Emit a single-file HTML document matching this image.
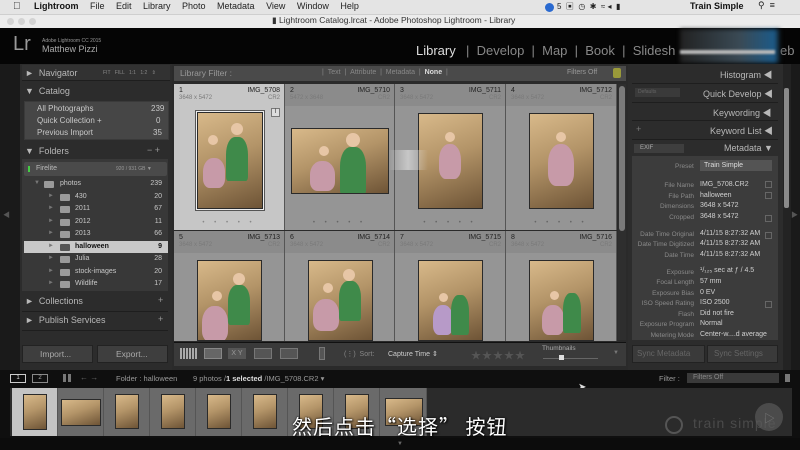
<!DOCTYPE html>
<html><head><meta charset="utf-8"><style>
*{margin:0;padding:0;box-sizing:border-box}
body{width:800px;height:450px;overflow:hidden;background:#0c0c0c;font-family:"Liberation Sans","Noto Sans CJK SC",sans-serif;position:relative;color:#ccc}
.a{position:absolute}
.t{position:absolute;white-space:nowrap}
.ph{position:absolute;border:1px solid #2a2a2a;background:linear-gradient(160deg,#d8b98a 0%,#b39468 45%,#6e5436 100%);overflow:hidden}
.ph .g{position:absolute;background:#3f8a4a;border-radius:40% 40% 10% 10%}
.ph .p{position:absolute;background:#c79aa8;border-radius:45% 45% 30% 30%}
.ph .h{position:absolute;background:#e7c6a6;border-radius:50%}
.cell{position:absolute;background:#959595;border-right:1px solid #555}
.cell .hd{position:absolute;left:0;top:0;right:0;height:22px;background:#8b8b8b}
.cell .n{position:absolute;left:5px;top:3px;font-size:7px;color:#222}
.cell .nm{position:absolute;right:4px;top:3px;font-size:7px;color:#222}
.cell .dm{position:absolute;left:5px;top:11px;font-size:6px;color:#7a7a7a}
.cell .cr{position:absolute;right:4px;top:11px;font-size:6px;color:#7a7a7a}
.cell .dots{position:absolute;left:0;right:0;top:136px;text-align:center;font-size:6px;color:#666;letter-spacing:4px}
.lp{font-size:8px;color:#c8c8c8}
.hdr{position:absolute;font-size:9px;color:#b8b8b8}
.fr{position:absolute;left:24px;width:144px;height:12px;font-size:7px;color:#c8c8c8}
.fr .fi{position:absolute;left:36px;top:3px;width:10px;height:7px;background:#9a9a9a;border-radius:1px}
.fr .fl{position:absolute;left:51px;top:2px}
.fr .fc{position:absolute;right:6px;top:2px}
.fr .ar{position:absolute;left:24px;top:2px;font-size:6px;color:#777}
.ml{position:absolute;right:106px;font-size:6.5px;color:#8a8a8a;text-align:right}
.mv{position:absolute;left:700px;font-size:7px;color:#d0d0d0;white-space:nowrap}
.fs{position:absolute;top:388px;width:46px;height:48px;background:#6a6a6a;border-right:1px solid #555}
</style></head><body>
<div class="a" style="left:0;top:0;width:800px;height:14px;background:#e4e4e4"></div>
<div class="t" style="left:13px;top:1px;font-size:10px;color:#222">&#63743;</div>
<div class="t" style="left:34px;top:1px;font-size:9px;color:#111;font-weight:bold">Lightroom</div>
<div class="t" style="left:90px;top:1px;font-size:9px;color:#222;word-spacing:9px">File Edit Library Photo Metadata View Window Help</div>
<div class="a" style="left:545px;top:3px;width:9px;height:9px;border-radius:50%;background:#2a6ad0"></div>
<div class="t" style="left:557px;top:1px;font-size:8px;color:#222">5 &nbsp;&#9635; &nbsp;&#9719; &nbsp;&#10033; &nbsp;&#8776; &#9666;&nbsp; &#9646;</div>
<div class="t" style="left:690px;top:1px;font-size:9px;color:#111;font-weight:bold">Train Simple</div>
<div class="t" style="left:758px;top:0px;font-size:9px;color:#222">&#9906; &nbsp;&#8801;</div>
<div class="a" style="left:0;top:14px;width:800px;height:14px;background:#ececec;border-top:1px solid #cfcfcf"></div>
<div class="a" style="left:7px;top:18px;width:7px;height:7px;border-radius:50%;background:#d3d3d3"></div>
<div class="a" style="left:18px;top:18px;width:7px;height:7px;border-radius:50%;background:#d3d3d3"></div>
<div class="a" style="left:29px;top:18px;width:7px;height:7px;border-radius:50%;background:#d3d3d3"></div>
<div class="t" style="left:272px;top:15px;font-size:8.5px;color:#333">&#9646; Lightroom Catalog.lrcat - Adobe Photoshop Lightroom - Library</div>
<div class="a" style="left:0;top:28px;width:800px;height:36px;background:#050505"></div>
<div class="t" style="left:13px;top:33px;font-size:20px;color:#9a9a9a">Lr</div>
<div class="t" style="left:42px;top:38px;font-size:5px;color:#999">Adobe Lightroom CC 2015</div>
<div class="t" style="left:42px;top:44px;font-size:9px;color:#aaa">Matthew Pizzi</div>
<div class="t" style="left:416px;top:43px;font-size:13px;color:#ddd">Library</div>
<div class="t" style="left:466px;top:43px;font-size:13px;color:#888">| &nbsp;Develop &nbsp;| &nbsp;Map &nbsp;| &nbsp;Book &nbsp;| &nbsp;Slidesh</div>
<div class="t" style="left:780px;top:43px;font-size:13px;color:#888">eb</div>
<div class="a" style="left:680px;top:29px;width:100px;height:34px;background:linear-gradient(90deg,#222 0%,#3a4a55 60%,#1c5a88 95%,#111 100%);filter:blur(2px)"></div>
<div class="a" style="left:680px;top:50px;width:95px;height:4px;background:#bbb;filter:blur(1px)"></div>
<div class="a" style="left:0;top:64px;width:800px;height:306px;background:#1a1a1a"></div>
<div class="t" style="left:3px;top:210px;font-size:7px;color:#555">&#9664;</div>
<div class="t" style="left:791px;top:210px;font-size:7px;color:#555">&#9654;</div>
<div class="a" style="left:20px;top:64px;width:152px;height:306px;background:#2c2c2c"></div>
<div class="a" style="left:22px;top:65px;width:148px;height:16px;background:#323232;border-bottom:1px solid #1e1e1e"></div>
<div class="hdr" style="left:25px;top:68px">&#9658;&nbsp; Navigator</div>
<div class="t" style="left:103px;top:70px;font-size:5px;color:#888;word-spacing:3px">FIT FILL 1:1 1:2 &#8661;</div>
<div class="hdr" style="left:25px;top:86px">&#9660;&nbsp; Catalog</div>
<div class="a" style="left:24px;top:101px;width:145px;height:39px;background:#464646;border:1px solid #3a3a3a"></div>
<div class="t lp" style="left:37px;top:104px">All Photographs</div><div class="t lp" style="left:151px;top:104px">239</div>
<div class="t lp" style="left:37px;top:116px">Quick Collection +</div><div class="t lp" style="left:156px;top:116px">0</div>
<div class="t lp" style="left:37px;top:128px">Previous Import</div><div class="t lp" style="left:153px;top:128px">35</div>
<div class="hdr" style="left:25px;top:146px">&#9660;&nbsp; Folders</div>
<div class="t" style="left:147px;top:145px;font-size:9px;color:#999">&#8722; +</div>
<div class="a" style="left:22px;top:159px;width:146px;height:132px;background:#383838"></div>
<div class="a" style="left:24px;top:162px;width:143px;height:14px;background:#4a4a4a;border-radius:2px"></div>
<div class="a" style="left:28px;top:166px;width:2px;height:6px;background:#4c4"></div>
<div class="t" style="left:36px;top:165px;font-size:7px;color:#bbb">Firelite</div>
<div class="t" style="left:116px;top:166px;font-size:5px;color:#999">920 / 931 GB &#9660;</div>
<div class="fr" style="top:178px"><span class="ar" style="left:10px">&#9660;</span><span class="fi" style="left:20px"></span><span class="fl" style="left:36px">photos</span><span class="fc">239</span></div>
<div class="fr" style="top:190.5px"><span class="ar">&#9658;</span><span class="fi"></span><span class="fl">430</span><span class="fc">20</span></div>
<div class="fr" style="top:203px"><span class="ar">&#9658;</span><span class="fi"></span><span class="fl">2011</span><span class="fc">67</span></div>
<div class="fr" style="top:215.5px"><span class="ar">&#9658;</span><span class="fi"></span><span class="fl">2012</span><span class="fc">11</span></div>
<div class="fr" style="top:228px"><span class="ar">&#9658;</span><span class="fi"></span><span class="fl">2013</span><span class="fc">66</span></div>
<div class="fr" style="top:240.5px;background:#c9c9c9;color:#111;font-weight:bold"><span class="ar">&#9658;</span><span class="fi" style="background:#555"></span><span class="fl">halloween</span><span class="fc">9</span></div>
<div class="fr" style="top:253px"><span class="ar">&#9658;</span><span class="fi"></span><span class="fl">Julia</span><span class="fc">28</span></div>
<div class="fr" style="top:265.5px"><span class="ar">&#9658;</span><span class="fi"></span><span class="fl">stock-images</span><span class="fc">20</span></div>
<div class="fr" style="top:278px"><span class="ar">&#9658;</span><span class="fi"></span><span class="fl">Wildlife</span><span class="fc">17</span></div>
<div class="hdr" style="left:25px;top:296px">&#9658;&nbsp; Collections</div><div class="t" style="left:158px;top:295px;font-size:9px;color:#999">+</div>
<div class="a" style="left:22px;top:311px;width:146px;height:1px;background:#1e1e1e"></div>
<div class="hdr" style="left:25px;top:315px">&#9658;&nbsp; Publish Services</div><div class="t" style="left:158px;top:314px;font-size:9px;color:#999">+</div>
<div class="a" style="left:22px;top:330px;width:146px;height:1px;background:#1e1e1e"></div>
<div class="a" style="left:22px;top:345px;width:71px;height:18px;background:#3e3e3e;border:1px solid #222"></div>
<div class="t" style="left:40px;top:349px;font-size:8.5px;color:#aaa">Import...</div>
<div class="a" style="left:97px;top:345px;width:71px;height:18px;background:#3e3e3e;border:1px solid #222"></div>
<div class="t" style="left:116px;top:349px;font-size:8.5px;color:#aaa">Export...</div>
<div class="a" style="left:172px;top:64px;width:456px;height:306px;background:#2a2a2a"></div>
<div class="a" style="left:174px;top:66px;width:452px;height:15px;background:#4a4a4a"></div>
<div class="t" style="left:180px;top:68px;font-size:8.5px;color:#999">Library Filter :</div>
<div class="t" style="left:322px;top:69px;font-size:7px;color:#888">| &nbsp;Text &nbsp;| &nbsp;Attribute &nbsp;| &nbsp;Metadata &nbsp;| &nbsp;<b style="color:#ddd">None</b> &nbsp;|</div>
<div class="t" style="left:567px;top:69px;font-size:7px;color:#999">Filters Off</div>
<div class="a" style="left:613px;top:68px;width:8px;height:10px;background:#9a9a3a;border-radius:2px"></div>
<div class="a" style="left:174px;top:83px;width:443px;height:258px;background:#2a2a2a"></div>
<div class="cell" style="left:174px;top:84px;width:111px;height:146px;background:#c6c6c6"><div class="hd" style="background:#c6c6c6"></div><span class="n">1</span><span class="nm">IMG_5708</span><span class="dm">3648 x 5472</span><span class="cr">CR2</span><span class="dots" style="color:#888">• • • • •</span></div>
<div class="a" style="left:271px;top:108px;width:9px;height:9px;border:1px solid #777;background:#ddd;font-size:6px;color:#333;text-align:center">I</div>
<div class="a" style="left:195px;top:110px;width:70px;height:101px;border:1px solid #555;background:#eee"></div>
<div class="ph" style="left:197px;top:112px;width:66px;height:97px"><div class="h" style="left:10px;top:22px;width:10px;height:10px"></div><div class="p" style="left:5px;top:45px;width:22px;height:30px"></div><div class="h" style="left:33px;top:10px;width:12px;height:12px"></div><div class="g" style="left:28px;top:24px;width:22px;height:44px"></div></div>
<div class="cell" style="left:285px;top:84px;width:110px;height:146px"><div class="hd"></div><span class="n">2</span><span class="nm">IMG_5710</span><span class="dm">5472 x 3648</span><span class="cr">CR2</span><span class="dots">• • • • •</span></div>
<div class="ph" style="left:291px;top:128px;width:98px;height:66px"><div class="h" style="left:27px;top:17px;width:10px;height:10px"></div><div class="p" style="left:18px;top:32px;width:25px;height:30px"></div><div class="h" style="left:54px;top:4px;width:14px;height:14px"></div><div class="g" style="left:48px;top:18px;width:26px;height:48px"></div></div>
<div class="cell" style="left:395px;top:84px;width:111px;height:146px"><div class="hd"></div><span class="n">3</span><span class="nm">IMG_5711</span><span class="dm">3648 x 5472</span><span class="cr">CR2</span><span class="dots">• • • • •</span></div>
<div class="ph" style="left:418px;top:113px;width:65px;height:96px"><div class="h" style="left:26px;top:18px;width:10px;height:10px"></div><div class="p" style="left:20px;top:30px;width:22px;height:35px"></div></div>
<div class="a" style="left:388px;top:150px;width:40px;height:20px;background:linear-gradient(90deg,rgba(200,200,200,0),rgba(220,220,220,.7),rgba(200,200,200,0))"></div>
<div class="cell" style="left:506px;top:84px;width:111px;height:146px"><div class="hd"></div><span class="n">4</span><span class="nm">IMG_5712</span><span class="dm">3648 x 5472</span><span class="cr">CR2</span><span class="dots">• • • • •</span></div>
<div class="ph" style="left:529px;top:113px;width:65px;height:96px"><div class="h" style="left:26px;top:18px;width:10px;height:10px"></div><div class="p" style="left:18px;top:30px;width:26px;height:42px"></div></div>
<div class="cell" style="left:174px;top:231px;width:111px;height:110px"><div class="hd"></div><span class="n">5</span><span class="nm">IMG_5713</span><span class="dm">3648 x 5472</span><span class="cr">CR2</span></div>
<div class="ph" style="left:197px;top:260px;width:65px;height:81px"><div class="h" style="left:14px;top:30px;width:10px;height:10px"></div><div class="p" style="left:4px;top:45px;width:26px;height:36px"></div><div class="h" style="left:35px;top:12px;width:12px;height:12px"></div><div class="g" style="left:30px;top:24px;width:22px;height:40px"></div></div>
<div class="cell" style="left:285px;top:231px;width:110px;height:110px"><div class="hd"></div><span class="n">6</span><span class="nm">IMG_5714</span><span class="dm">3648 x 5472</span><span class="cr">CR2</span></div>
<div class="ph" style="left:308px;top:260px;width:65px;height:81px"><div class="h" style="left:14px;top:22px;width:10px;height:10px"></div><div class="p" style="left:4px;top:38px;width:26px;height:32px"></div><div class="h" style="left:34px;top:8px;width:12px;height:12px"></div><div class="g" style="left:30px;top:20px;width:22px;height:40px"></div></div>
<div class="cell" style="left:395px;top:231px;width:111px;height:110px"><div class="hd"></div><span class="n">7</span><span class="nm">IMG_5715</span><span class="dm">3648 x 5472</span><span class="cr">CR2</span></div>
<div class="ph" style="left:418px;top:260px;width:65px;height:81px"><div class="h" style="left:20px;top:32px;width:9px;height:9px"></div><div class="p" style="left:14px;top:44px;width:20px;height:30px;background:#b79ac8"></div><div class="g" style="left:32px;top:34px;width:18px;height:40px"></div></div>
<div class="cell" style="left:506px;top:231px;width:111px;height:110px"><div class="hd"></div><span class="n">8</span><span class="nm">IMG_5716</span><span class="dm">3648 x 5472</span><span class="cr">CR2</span></div>
<div class="ph" style="left:529px;top:260px;width:65px;height:81px"><div class="h" style="left:20px;top:30px;width:9px;height:9px"></div><div class="p" style="left:12px;top:44px;width:22px;height:30px"></div><div class="g" style="left:33px;top:32px;width:18px;height:40px"></div></div>
<div class="a" style="left:618px;top:84px;width:8px;height:256px;background:#2e2e2e"></div>
<div class="a" style="left:619px;top:86px;width:6px;height:145px;background:#7a7a7a;border-radius:3px"></div>
<div class="a" style="left:174px;top:342px;width:452px;height:24px;background:#3a3a3a;border-top:1px solid #111"></div>
<div class="a" style="left:180px;top:348px;width:18px;height:11px;background:repeating-linear-gradient(90deg,#aaa 0 2px,#3a3a3a 2px 3px),#aaa"></div>
<div class="a" style="left:204px;top:348px;width:18px;height:11px;background:#666;border:1px solid #888"></div>
<div class="a" style="left:228px;top:348px;width:18px;height:11px;background:#555;font-size:7px;color:#999;text-align:center;line-height:11px">X Y</div>
<div class="a" style="left:254px;top:348px;width:18px;height:11px;background:#555;border:1px solid #777"></div>
<div class="a" style="left:280px;top:348px;width:18px;height:11px;background:#555;border:1px solid #777"></div>
<div class="a" style="left:319px;top:347px;width:6px;height:13px;background:#555;border:1px solid #777"></div>
<div class="t" style="left:344px;top:350px;font-size:7px;color:#888">(&#8942;)&nbsp; Sort:</div>
<div class="t" style="left:388px;top:350px;font-size:7px;color:#ccc">Capture Time &#8661;</div>
<div class="t" style="left:471px;top:347px;font-size:10px;color:#555;letter-spacing:1px">&#9733;&#9733;&#9733;&#9733;&#9733;</div>
<div class="t" style="left:542px;top:345px;font-size:6.5px;color:#aaa">Thumbnails</div>
<div class="a" style="left:543px;top:358px;width:55px;height:1px;background:#666"></div>
<div class="a" style="left:559px;top:355px;width:5px;height:5px;background:#ddd"></div>
<div class="t" style="left:613px;top:350px;font-size:6px;color:#777">&#9660;</div>
<div class="a" style="left:628px;top:64px;width:155px;height:306px;background:#2c2c2c"></div>
<div class="a" style="left:783px;top:64px;width:8px;height:306px;background:#232323"></div>
<div class="a" style="left:784px;top:88px;width:5px;height:120px;background:#8a8a8a;border-radius:2px"></div>
<div class="hdr" style="left:720px;top:68px">Histogram &#9664;</div>
<div class="a" style="left:632px;top:83px;width:146px;height:1px;background:#1e1e1e"></div>
<div class="a" style="left:635px;top:88px;width:45px;height:9px;background:#3a3a3a"></div>
<div class="t" style="left:638px;top:89px;font-size:5px;color:#666">Defaults</div>
<div class="hdr" style="left:703px;top:87px">Quick Develop &#9664;</div>
<div class="a" style="left:632px;top:102px;width:146px;height:1px;background:#1e1e1e"></div>
<div class="hdr" style="left:713px;top:106px">Keywording &#9664;</div>
<div class="a" style="left:632px;top:120px;width:146px;height:1px;background:#1e1e1e"></div>
<div class="t" style="left:636px;top:124px;font-size:9px;color:#777">+</div>
<div class="hdr" style="left:710px;top:124px">Keyword List &#9664;</div>
<div class="a" style="left:632px;top:139px;width:146px;height:1px;background:#1e1e1e"></div>
<div class="a" style="left:634px;top:144px;width:50px;height:9px;background:#3e3e3e"></div>
<div class="t" style="left:640px;top:145px;font-size:6px;color:#aaa">EXIF</div>
<div class="hdr" style="left:724px;top:143px">Metadata &#9660;</div>
<div class="a" style="left:632px;top:156px;width:146px;height:184px;background:#3c3c3c"></div>
<div class="t" style="left:675px;top:163px;font-size:6.5px;color:#888">Preset</div>
<div class="a" style="left:700px;top:160px;width:72px;height:11px;background:#545454"></div>
<div class="t" style="left:704px;top:162px;font-size:7px;color:#ddd">Train Simple</div>
<div class="ml" style="top:182px">File Name</div><div class="mv" style="top:181px">IMG_5708.CR2</div>
<div class="ml" style="top:193px">File Path</div><div class="mv" style="top:192px">halloween</div>
<div class="ml" style="top:203px">Dimensions</div><div class="mv" style="top:202px">3648 x 5472</div>
<div class="ml" style="top:214px">Cropped</div><div class="mv" style="top:213px">3648 x 5472</div>
<div class="ml" style="top:231px">Date Time Original</div><div class="mv" style="top:230px">4/11/15 8:27:32 AM</div>
<div class="ml" style="top:241px">Date Time Digitized</div><div class="mv" style="top:240px">4/11/15 8:27:32 AM</div>
<div class="ml" style="top:252px">Date Time</div><div class="mv" style="top:251px">4/11/15 8:27:32 AM</div>
<div class="ml" style="top:269px">Exposure</div><div class="mv" style="top:267px">&#185;/&#8321;&#8322;&#8325; sec at &#402; / 4.5</div>
<div class="ml" style="top:279px">Focal Length</div><div class="mv" style="top:278px">57 mm</div>
<div class="ml" style="top:290px">Exposure Bias</div><div class="mv" style="top:289px">0 EV</div>
<div class="ml" style="top:300px">ISO Speed Rating</div><div class="mv" style="top:299px">ISO 2500</div>
<div class="ml" style="top:311px">Flash</div><div class="mv" style="top:310px">Did not fire</div>
<div class="ml" style="top:321px">Exposure Program</div><div class="mv" style="top:320px">Normal</div>
<div class="ml" style="top:332px">Metering Mode</div><div class="mv" style="top:331px">Center-w....d average</div>
<div class="a" style="left:765px;top:181px;width:7px;height:7px;border:1px solid #666"></div>
<div class="a" style="left:765px;top:192px;width:7px;height:7px;border:1px solid #666"></div>
<div class="a" style="left:765px;top:215px;width:7px;height:7px;border:1px solid #666"></div>
<div class="a" style="left:765px;top:232px;width:7px;height:7px;border:1px solid #666"></div>
<div class="a" style="left:765px;top:301px;width:7px;height:7px;border:1px solid #666"></div>
<div class="a" style="left:632px;top:345px;width:73px;height:18px;background:#3a3a3a;border:1px solid #222"></div>
<div class="t" style="left:637px;top:349px;font-size:8px;color:#666">Sync Metadata</div>
<div class="a" style="left:707px;top:345px;width:71px;height:18px;background:#3a3a3a;border:1px solid #222"></div>
<div class="t" style="left:714px;top:349px;font-size:8px;color:#666">Sync Settings</div>
<div class="a" style="left:0;top:370px;width:800px;height:18px;background:#0f0f0f"></div>
<div class="a" style="left:10px;top:374px;width:16px;height:9px;border:1px solid #ccc;font-size:6px;color:#ddd;text-align:center;line-height:7px">1</div>
<div class="a" style="left:32px;top:374px;width:16px;height:9px;border:1px solid #888;font-size:6px;color:#aaa;text-align:center;line-height:7px">2</div>
<div class="a" style="left:63px;top:374px;width:8px;height:8px;background:repeating-linear-gradient(90deg,#777 0 3px,#0f0f0f 3px 5px)"></div>
<div class="t" style="left:80px;top:373px;font-size:8px;color:#666">&#8592; &#8594;</div>
<div class="t" style="left:116px;top:374px;font-size:7.5px;color:#999">Folder : halloween</div>
<div class="t" style="left:193px;top:374px;font-size:7.5px;color:#999">9 photos /<b style="color:#ddd">1 selected</b> /IMG_5708.CR2 &#9662;</div>
<div class="t" style="left:659px;top:374px;font-size:7.5px;color:#999">Filter :</div>
<div class="a" style="left:687px;top:373px;width:92px;height:10px;background:#3a3a3a"></div>
<div class="t" style="left:693px;top:374px;font-size:7px;color:#888">Filters Off</div>
<div class="a" style="left:785px;top:374px;width:5px;height:8px;background:#777"></div>
<div class="t" style="left:578px;top:382px;font-size:10px;color:#ddd">&#10148;</div>
<div class="a" style="left:0;top:388px;width:800px;height:50px;background:#0f0f0f"></div>
<div class="a" style="left:10px;top:388px;width:782px;height:48px;background:#2b2b2b"></div>
<div class="fs" style="left:12px;background:#c4c4c4"></div>
<div class="ph" style="left:23px;top:394px;width:24px;height:36px"></div>
<div class="fs" style="left:58px"></div><div class="ph" style="left:61px;top:399px;width:40px;height:27px"></div>
<div class="fs" style="left:104px"></div><div class="ph" style="left:115px;top:394px;width:24px;height:35px"></div>
<div class="fs" style="left:150px"></div><div class="ph" style="left:161px;top:394px;width:24px;height:35px"></div>
<div class="fs" style="left:196px"></div><div class="ph" style="left:207px;top:394px;width:24px;height:35px"></div>
<div class="fs" style="left:242px"></div><div class="ph" style="left:253px;top:394px;width:24px;height:35px"></div>
<div class="fs" style="left:288px"></div><div class="ph" style="left:299px;top:394px;width:24px;height:35px"></div>
<div class="fs" style="left:334px"></div><div class="ph" style="left:345px;top:394px;width:24px;height:35px"></div>
<div class="fs" style="left:380px;width:47px"></div><div class="ph" style="left:385px;top:398px;width:38px;height:28px"></div>
<div class="a" style="left:665px;top:416px;width:18px;height:18px;border:2px solid #555;border-radius:50%"></div>
<div class="t" style="left:693px;top:415px;font-size:14px;color:#4a4a4a;letter-spacing:1px">train simple</div>
<div class="a" style="left:755px;top:403px;width:28px;height:28px;background:rgba(90,90,90,.7);border-radius:50%"></div>
<div class="t" style="left:764px;top:410px;font-size:11px;color:#777">&#9655;</div>
<div class="t" style="left:292px;top:411px;font-size:20px;color:#fff;font-family:'Noto Sans CJK SC','WenQuanYi Zen Hei',sans-serif;letter-spacing:1px;text-shadow:0 0 2px #000,1px 1px 2px #000">然后点击“选择” 按钮</div>
<div class="t" style="left:397px;top:441px;font-size:6px;color:#666">&#9660;</div>
</body></html>
